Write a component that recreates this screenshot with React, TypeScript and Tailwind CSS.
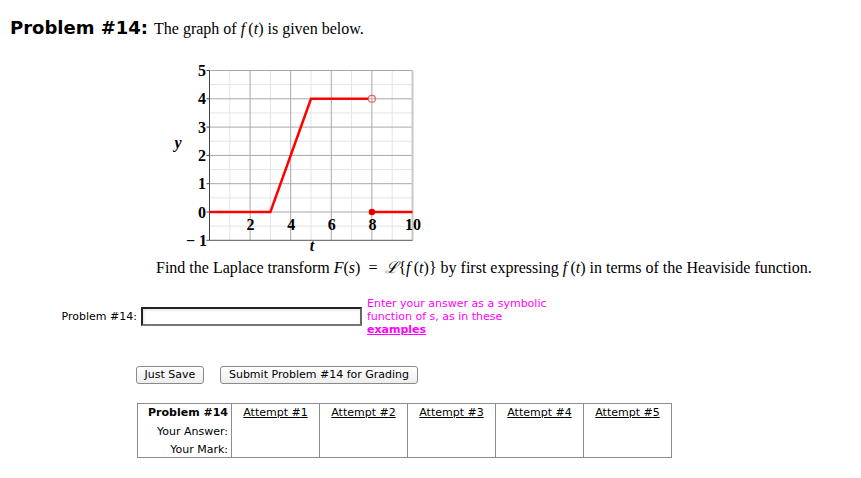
import React from 'react';

// plot mapping (page coords, svg viewBox matches page)
const X = (t: number) => 209.5 + t * 20.3;
const Y = (y: number) => 211 - y * 28.3;

function Graph() {
  const minorX = [1, 3, 5, 7, 9];
  const majorX = [2, 4, 6, 8];
  const minorY = [-0.5, 0.5, 1.5, 2.5, 3.5, 4.5];
  const majorY = [0, 1, 2, 3, 4];
  const yLabels = [5, 4, 3, 2, 1, 0];
  const xLabels = [2, 4, 6, 8, 10];
  return (
    <svg
      width={270}
      height={195}
      viewBox="160 58 270 195"
      className="block ml-[160px] font-['Liberation_Serif','Times_New_Roman',serif] font-bold"
    >
      {minorX.map(t => (
        <line key={'mx' + t} x1={X(t)} x2={X(t)} y1={Y(5)} y2={Y(-1)} stroke="#e4e4e4" strokeWidth={1} />
      ))}
      {minorY.map(y => (
        <line key={'my' + y} x1={X(0)} x2={X(10)} y1={Y(y)} y2={Y(y)} stroke="#e4e4e4" strokeWidth={1} />
      ))}
      {majorX.map(t => (
        <line key={'Mx' + t} x1={X(t)} x2={X(t)} y1={Y(5)} y2={Y(-1)} stroke="#a8a8a8" strokeWidth={1} />
      ))}
      {majorY.map(y => (
        <line key={'My' + y} x1={X(0)} x2={X(10)} y1={Y(y)} y2={Y(y)} stroke="#a8a8a8" strokeWidth={1} />
      ))}
      <line x1={X(0)} x2={X(10)} y1={Y(5)} y2={Y(5)} stroke="#a8a8a8" strokeWidth={1} />
      <line x1={X(10)} x2={X(10)} y1={Y(5)} y2={Y(-1)} stroke="#c8c8c8" strokeWidth={2} />
      <line x1={X(0)} x2={X(10)} y1={Y(-1)} y2={Y(-1)} stroke="#555" strokeWidth={1} />
      <line x1={X(0)} x2={X(0)} y1={Y(5)} y2={Y(-1)} stroke="#444" strokeWidth={1} />
      {[5, 4, 3, 2, 1, 0, -1].map(y => (
        <line key={'tk' + y} x1={X(0) - 3} x2={X(0)} y1={Y(y)} y2={Y(y)} stroke="#444" strokeWidth={1} />
      ))}
      {yLabels.map(y => (
        <text key={'yl' + y} x={206} y={Y(y) + 5.5} textAnchor="end" fontSize={16}>
          {y}
        </text>
      ))}
      <text x={207} y={Y(-1) + 5.5} textAnchor="end" fontSize={16}>
        − 1
      </text>
      {xLabels.map(t => (
        <text key={'xl' + t} x={X(t) + 0.5} y={229} textAnchor="middle" fontSize={16}>
          {t}
        </text>
      ))}
      <text x={178} y={147} textAnchor="middle" fontSize={16} fontStyle="italic">
        y
      </text>
      <text x={312} y={250} textAnchor="middle" fontSize={16} fontStyle="italic">
        t
      </text>
      <polyline
        points={`${X(0)},${Y(0)} ${X(3)},${Y(0)} ${X(5)},${Y(4)} ${X(8) - 3.5},${Y(4)}`}
        fill="none"
        stroke="#ff0000"
        strokeWidth={2.5}
      />
      <line x1={X(8)} x2={X(10)} y1={Y(0)} y2={Y(0)} stroke="#ff0000" strokeWidth={2.5} />
      <circle cx={X(8)} cy={Y(4)} r={3.5} fill="none" stroke="#f06060" strokeWidth={1.2} />
      <circle cx={X(8)} cy={Y(0)} r={3.2} fill="#e00000" />
    </svg>
  );
}

export default function App() {
  const attempts = [1, 2, 3, 4, 5];
  return (
    <div className="w-[861px] h-[478px] bg-white text-black overflow-hidden">
      <div className="pt-[18px] pl-[10px] leading-[20px] flex items-baseline">
        <span className="text-[18px] font-bold font-[Verdana,'DejaVu_Sans',sans-serif]">Problem #14:</span>
        <span className="ml-[6px] text-[16px] font-['Liberation_Serif','Times_New_Roman',serif]">
          The graph of <i>f</i>&thinsp;(<i>t</i>) is given below.
        </span>
      </div>

      <div className="mt-[20px]">
        <Graph />
      </div>

      <div className="mt-[4px] ml-[156px] leading-[20px] text-[16px] font-['Liberation_Serif','Times_New_Roman',serif]">
        Find the Laplace transform <i>F</i>(<i>s</i>) &nbsp;=&nbsp; <i>ℒ</i>{'{'}<i>f</i>&thinsp;(<i>t</i>){'}'} by first
        expressing <i>f</i>&thinsp;(<i>t</i>) in terms of the Heaviside function.
      </div>

      <div className="mt-[19px] flex items-center text-[11px] font-[Verdana,'DejaVu_Sans',sans-serif]">
        <div className="w-[137px] text-right mt-[2px]">Problem #14:</div>
        <input
          type="text"
          className="ml-[4px] w-[221px] h-[19px] bg-white border-2 border-t-[#222] border-l-[#222] border-r-[#666] border-b-[#777] outline-none shadow-[inset_1px_1px_3px_rgba(0,0,0,0.12)]"
        />
        <div className="ml-[5px] text-[#ff00ff] leading-[13px] text-[11px]">
          Enter your answer as a symbolic
          <br />
          function of s, as in these
          <br />
          <a className="font-bold underline cursor-pointer">examples</a>
        </div>
      </div>

      <div className="mt-[30px] flex text-[11px] font-[Verdana,'DejaVu_Sans',sans-serif]">
        <button className="ml-[136px] w-[68px] h-[18px] rounded-[3px] border border-[#8a8a8a] bg-gradient-to-b from-white to-[#ededed] leading-[16px]">
          Just Save
        </button>
        <button className="ml-[16px] w-[198px] h-[18px] rounded-[3px] border border-[#8a8a8a] bg-gradient-to-b from-white to-[#ededed] leading-[16px]">
          Submit Problem #14 for Grading
        </button>
      </div>

      <div className="mt-[19px] ml-[137px] w-[535px] h-[55px] flex border border-[#8c8c8c] text-[11px] font-[Verdana,'DejaVu_Sans',sans-serif]">
        <div className="w-[94px] border-r border-[#8c8c8c] flex flex-col items-end pr-[3px] leading-[18.5px]">
          <span className="font-bold">Problem #14</span>
          <span>Your Answer:</span>
          <span>Your Mark:</span>
        </div>
        {attempts.map((n, i) => (
          <div
            key={n}
            className={`flex-1 flex justify-center leading-[18.5px] ${i < 4 ? 'border-r border-[#8c8c8c]' : ''}`}
          >
            <span className="underline">Attempt #{n}</span>
          </div>
        ))}
      </div>
    </div>
  );
}
